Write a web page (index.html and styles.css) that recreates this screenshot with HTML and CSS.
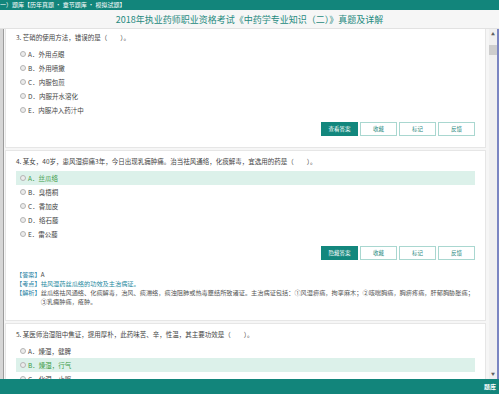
FILE: index.html
```html
<!DOCTYPE html>
<html lang="zh">
<head>
<meta charset="utf-8">
<title>真题及详解</title>
<link rel="stylesheet" href="styles.css">
</head>
<body>
<div class="page">
  <div class="topbar">一）题库【历年真题 • 章节题库 • 模拟试题】</div>
  <div class="titlebar">2018年执业药师职业资格考试《中药学专业知识（二）》真题及详解</div>
  <div class="main">
    <div class="leftstrip"></div>
    <div class="content">
      <div class="scroll-inner">
        <div class="card">
          <div class="q">3. 芒硝的使用方法，错误的是（　　）。</div>
          <ul class="opts">
            <li class="opt"><span class="radio"></span>A．外用点眼</li>
            <li class="opt"><span class="radio"></span>B．外用喷撒</li>
            <li class="opt"><span class="radio"></span>C．内服包煎</li>
            <li class="opt"><span class="radio"></span>D．内服开水溶化</li>
            <li class="opt"><span class="radio"></span>E．内服冲入药汁中</li>
          </ul>
          <div class="btns">
            <span class="btn primary">查看答案</span>
            <span class="btn">收藏</span>
            <span class="btn">标记</span>
            <span class="btn">反馈</span>
          </div>
        </div>
        <div class="card">
          <div class="q">4. 某女，40岁，患风湿痹痛3年，今日出现乳痈肿痛。治当祛风通络，化痰解毒，宜选用的药是（　　）。</div>
          <ul class="opts">
            <li class="opt right"><span class="radio"></span>A．丝瓜络</li>
            <li class="opt"><span class="radio"></span>B．臭梧桐</li>
            <li class="opt"><span class="radio"></span>C．香加皮</li>
            <li class="opt"><span class="radio"></span>D．络石藤</li>
            <li class="opt"><span class="radio"></span>E．雷公藤</li>
          </ul>
          <div class="btns">
            <span class="btn primary">隐藏答案</span>
            <span class="btn">收藏</span>
            <span class="btn">标记</span>
            <span class="btn">反馈</span>
          </div>
          <div class="answer">
            <div class="aline"><span class="lbl">【答案】</span><span class="aval">A</span></div>
            <div class="aline"><span class="lbl">【考点】</span><span class="point">祛风湿药丝瓜络的功效及主治病证。</span></div>
            <div class="aline"><span class="lbl">【解析】</span><span class="atext">丝瓜络祛风通络、化痰解毒，治风、痰滞络，痰浊阻肺或热毒壅结所致诸证。主治病证包括：①风湿痹痛，拘挛麻木；②咳喘胸痛，胸痹疼痛，肝郁胸胁胀痛；<br>③乳痈肿痛，疮肿。</span></div>
          </div>
        </div>
        <div class="card">
          <div class="q">5. 某医师治湿阻中焦证，提用厚朴，此药味苦、辛，性温，其主要功效是（　　）。</div>
          <ul class="opts">
            <li class="opt"><span class="radio"></span>A．燥湿，健脾</li>
            <li class="opt right"><span class="radio"></span>B．燥湿，行气</li>
            <li class="opt"><span class="radio"></span>C．化湿，止呕</li>
          </ul>
        </div>
      </div>
    </div>
    <div class="scrollbar">
      <div class="arrow">▲</div>
      <div class="thumb"></div>
      <div class="track"></div>
      <div class="arrow">▼</div>
    </div>
    <div class="rightline"></div>
  </div>
  <div class="bottombar"><span class="bb-text">题库</span></div>
</div>
</body>
</html>
```

FILE: styles.css
```css
html, body {
  margin: 0;
  padding: 0;
}
body {
  width: 499px;
  height: 394px;
  overflow: hidden;
  font-family: "Noto Sans CJK SC", "Noto Sans", sans-serif;
  color: #444;
  background: #fff;
}
.page {
  display: flex;
  flex-direction: column;
  height: 394px;
}
.topbar {
  height: 10px;
  flex: none;
  background: #12857b;
  color: #fff;
  font-size: 6px;
  line-height: 10px;
  white-space: nowrap;
  overflow: hidden;
}
.titlebar {
  height: 18px;
  flex: none;
  background: #f6f6f6;
  border-bottom: 1px solid #e2e2e2;
  color: #1f8a80;
  font-size: 9px;
  line-height: 19px;
  text-align: center;
  white-space: nowrap;
}
.main {
  flex: none;
  height: 350px;
  display: flex;
  overflow: hidden;
}
.leftstrip {
  width: 3px;
  background: #d6d6d6;
  border-right: 1px solid #9c9c9c;
  flex: none;
}
.content {
  flex: 1;
  background: #f6f6f6;
  overflow: hidden;
  padding: 0 3px 0 1px;
}
.scroll-inner {
  margin-top: -3px;
}
.card {
  background: #fff;
  border: 1px solid #e6e6e6;
  padding: 6px 10px 11px 10px;
  margin-bottom: 2px;
}
.q {
  font-size: 6.5px;
  line-height: 9px;
  white-space: nowrap;
  color: #444;
}
.opts {
  list-style: none;
  margin: 5px 0 0 0;
  padding: 0;
}
.opt {
  height: 14px;
  display: flex;
  align-items: center;
  font-size: 6.5px;
  padding-left: 4px;
  color: #444;
}
.opt.right {
  background: #dcf1ea;
  color: #3a9a45;
}
.radio {
  width: 4px;
  height: 4px;
  border-radius: 50%;
  border: 1px solid #b5b5b5;
  background: #ececec;
  margin-right: 2px;
  flex: none;
}
.btns {
  display: flex;
  justify-content: flex-end;
  gap: 2px;
  margin-top: 5px;
}
.btn {
  width: 35px;
  height: 12px;
  border: 1px solid #a9d7d0;
  background: #fff;
  color: #2a8a80;
  font-size: 5.5px;
  line-height: 12px;
  text-align: center;
}
.btn.primary {
  background: #13877d;
  border-color: #13877d;
  color: #fff;
}
.answer {
  margin-top: 10px;
  margin-bottom: 3px;
  font-size: 6.2px;
  line-height: 9px;
}
.aline {
  display: flex;
  white-space: nowrap;
}
.lbl {
  color: #1e7fa3;
  flex: none;
}
.aval {
  color: #444;
}
.point {
  color: #1e8aa0;
}
.atext {
  color: #555;
}
.scrollbar {
  width: 8px;
  flex: none;
  background: #f0f0f0;
  display: flex;
  flex-direction: column;
}
.arrow {
  height: 10px;
  font-size: 4px;
  line-height: 10px;
  text-align: center;
  color: #606060;
}
.thumb {
  height: 10px;
  margin-top: 6px;
  background: #cdcdcd;
}
.track {
  flex: 1;
}
.rightline {
  width: 2px;
  flex: none;
  background: #7b86c2;
}
.bottombar {
  height: 15px;
  flex: none;
  background: #12857b;
  display: flex;
  justify-content: flex-end;
  align-items: center;
  padding-right: 3px;
}
.bb-text {
  color: #fff;
  font-size: 6px;
  font-weight: bold;
}
```
